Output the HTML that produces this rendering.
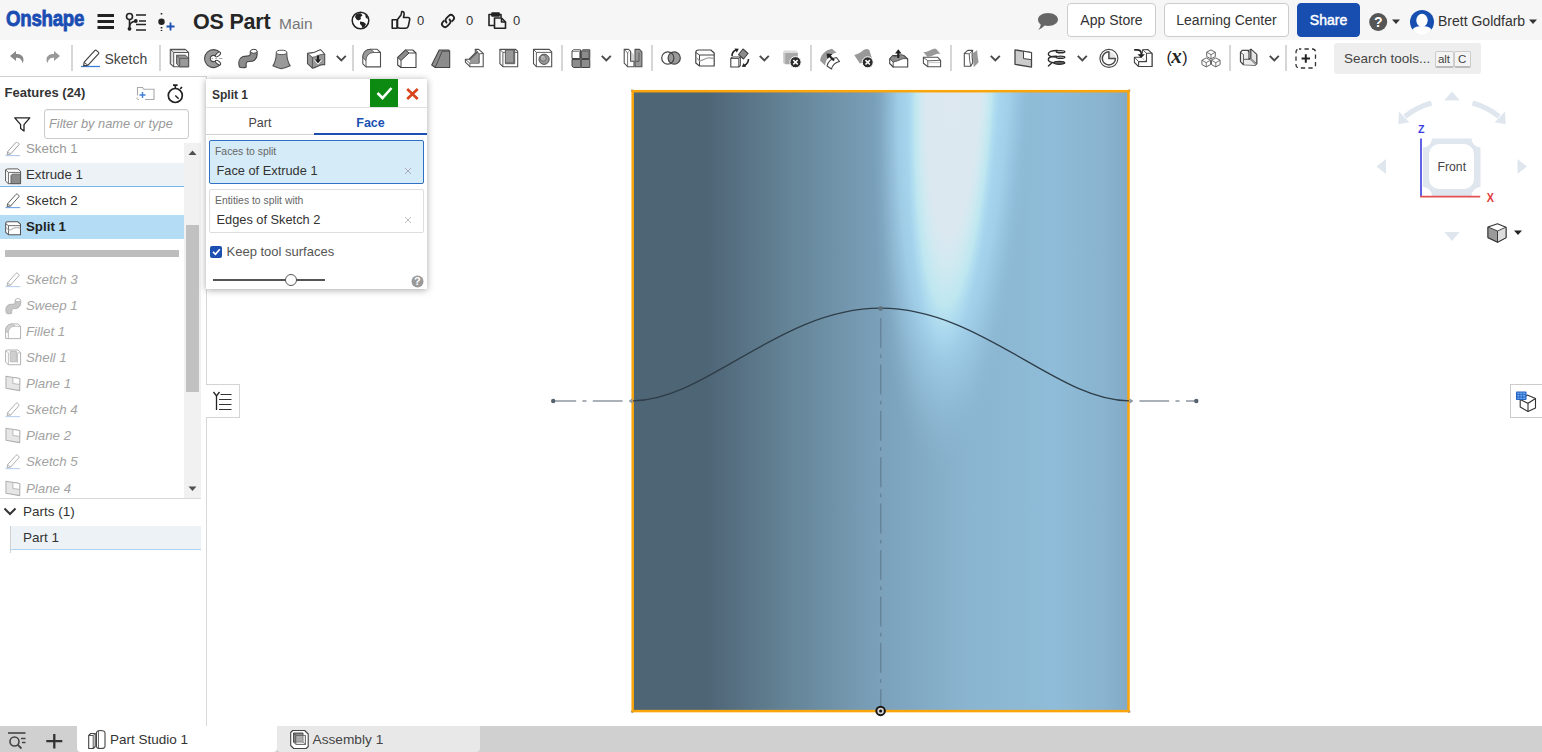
<!DOCTYPE html>
<html lang="en">
<head>
<meta charset="utf-8">
<title>OS Part - Onshape</title>
<style>
*{box-sizing:border-box;margin:0;padding:0}
html,body{width:1542px;height:752px;overflow:hidden;background:#fff;font-family:"Liberation Sans",sans-serif;color:#333}
.abs{position:absolute}
#topbar{position:absolute;left:0;top:0;width:1542px;height:40px;background:#f6f6f6}
#toolbar{position:absolute;left:0;top:0;width:1542px;height:76px}
#toolbg{position:absolute;left:0;top:40px;width:1542px;height:36px;background:#fff}
.sep{position:absolute;top:45px;width:1.500px;height:26px;background:#d6d6d6}
.btn{position:absolute;top:3px;height:34px;border:1px solid #ccc;border-radius:4px;background:#fff;font-size:14px;line-height:33.500px;text-align:center;color:#333}
svg{position:absolute;overflow:visible}
.t{position:absolute;white-space:nowrap;line-height:1}
.kbd{height:17px;border:1px solid #ccc;border-bottom:2px solid #bbb;border-radius:2px;background:#f4f4f4;font-size:11.500px;line-height:14px;text-align:center;color:#444}
/* feature list */
#features{position:absolute;left:0;top:76px;width:207px;height:650px;background:#fff;border-top:1px solid #d0d0d0;border-right:1px solid #d8d8d8}
#flist{position:absolute;left:0;top:65px;width:184px;height:356px;overflow:hidden}
.row{position:absolute;left:0;width:184px;height:26px;font-size:13.300px;line-height:26px;padding-left:26px;color:#333;white-space:nowrap}
.row.dim{color:#a3a3a3;font-style:italic}
.row svg{left:5px;top:4.500px;transform:scale(0.95);transform-origin:0 50%}
/* dialog */
#dialog{position:absolute;left:206px;top:79px;width:221px;height:210px;background:#fff;box-shadow:0 1px 7px rgba(0,0,0,.35)}
/* bottom */
#bottombar{position:absolute;left:0;top:726px;width:1542px;height:26px;background:#d0d0d0}
</style>
</head>
<body>
<!-- VIEWPORT -->
<svg id="viewport" class="abs" style="left:0;top:0" width="1542" height="752" viewBox="0 0 1542 752">
<defs>
<linearGradient id="gbody" x1="633" x2="1129" y1="0" y2="0" gradientUnits="userSpaceOnUse">
<stop offset="0" stop-color="#4e6576"/>
<stop offset="0.15" stop-color="#4e6576"/>
<stop offset="0.32" stop-color="#658598"/>
<stop offset="0.5" stop-color="#7ba1bb"/>
<stop offset="0.68" stop-color="#8ab5d0"/>
<stop offset="0.85" stop-color="#8fbcd8"/>
<stop offset="0.95" stop-color="#89b3cf"/>
<stop offset="1" stop-color="#82aac7"/>
</linearGradient>
<radialGradient id="ghalo" cx="0.5" cy="0.5" r="0.5">
<stop offset="0" stop-color="#aad8f1" stop-opacity="0.97"/>
<stop offset="0.55" stop-color="#aad8f1" stop-opacity="0.96"/>
<stop offset="0.7" stop-color="#a7d5ef" stop-opacity="0.8"/>
<stop offset="0.82" stop-color="#a1cfeb" stop-opacity="0.45"/>
<stop offset="0.92" stop-color="#99c7e3" stop-opacity="0.15"/>
<stop offset="1" stop-color="#94c4e2" stop-opacity="0"/>
</radialGradient>
<radialGradient id="ghi" cx="0.5" cy="0.5" r="0.5">
<stop offset="0" stop-color="#dde8f0" stop-opacity="1"/>
<stop offset="0.58" stop-color="#dce8f0" stop-opacity="1"/>
<stop offset="0.7" stop-color="#d0e9f1" stop-opacity="1"/>
<stop offset="0.82" stop-color="#c0e8f0" stop-opacity="0.95"/>
<stop offset="0.92" stop-color="#b0ddf0" stop-opacity="0.6"/>
<stop offset="1" stop-color="#a8d6f0" stop-opacity="0"/>
</radialGradient>
<clipPath id="cbody"><rect x="632.700" y="91.200" width="495.800" height="619.900"/></clipPath>
</defs>
<rect x="632.700" y="91.200" width="495.800" height="619.900" fill="url(#gbody)"/>
<g clip-path="url(#cbody)">
<ellipse cx="955" cy="60" rx="80" ry="410" fill="url(#ghalo)" transform="rotate(2.4 955 60)"/>
<ellipse cx="955" cy="60" rx="47" ry="298" fill="url(#ghi)" transform="rotate(2.4 955 60)"/>
</g>
<g fill="#8a8f96"><circle cx="632.300" cy="90.800" r="1.400"/><circle cx="1129" cy="90.800" r="1.400"/><circle cx="632.300" cy="711.500" r="1.400"/><circle cx="1129" cy="711.500" r="1.400"/></g><rect x="632.700" y="91.200" width="495.800" height="619.900" fill="none" stroke="#fba50c" stroke-width="2.500"/>
<!-- construction lines -->
<g fill="none" stroke="#8e98a1" stroke-width="1.400">
<path d="M553 401h23.200M582.400 401h4.100M592.800 401h29.800"/>
<path d="M1139.400 401h29.800M1175.500 401h4.100M1186 401h10"/>
</g>
<circle cx="553.200" cy="401" r="2.200" fill="#56626d"/>
<circle cx="1196.300" cy="401" r="2.200" fill="#56626d"/>
<path d="M628.500 401l4-2.800v5.600z" fill="#8e98a1"/>
<path d="M1133.500 401l-4-2.800v5.600z" fill="#8e98a1"/>
<path d="M880.700 318V710" fill="none" stroke="#66849a" stroke-width="1.500" stroke-dasharray="30 6.400 3.600 6.400"/>
<!-- spline -->
<path d="M633 400.800C705.500 400.800 780 308.200 880.600 308.200C981 308.200 1056.500 400.800 1129 400.800" fill="none" stroke="#2e3d48" stroke-width="1.250"/>
<circle cx="880.600" cy="308.500" r="2.300" fill="#5e6f7c"/>
<!-- origin -->
<circle cx="880.600" cy="710.900" r="4.250" fill="#d4d4d4" stroke="#161616" stroke-width="2"/>
<circle cx="880.600" cy="710.900" r="1.500" fill="#111"/>
</svg>
<div id="topbar">
<div class="t" id="logo" style="left:5.800px;top:8px;font-size:22.500px;font-weight:bold;color:#1a4db3;letter-spacing:-0.3px;-webkit-text-stroke:0.85px #1a4db3;transform-origin:0 0;transform:scaleX(0.83)">Onshape</div>
<svg style="left:97px;top:13px" width="18" height="17" viewBox="0 0 18 17"><path d="M0.5 2.5h16.5M0.5 8.5h16.5M0.5 14.5h16.5" stroke="#222" stroke-width="2.8" fill="none"/></svg>
<svg style="left:125px;top:12px" width="22" height="20" viewBox="0 0 22 20"><circle cx="4.5" cy="4.5" r="3" fill="#f6f6f6" stroke="#222" stroke-width="1.6"/><path d="M4.5 7.5v8.5" stroke="#222" stroke-width="1.6" fill="none"/><path d="M4.5 15c0-4 2-5.500 6-5.800" stroke="#222" stroke-width="1.6" fill="none"/><circle cx="4.500" cy="16.8" r="1.900" fill="#222"/><circle cx="10.800" cy="9" r="1.900" fill="#222"/><path d="M11 3h10M14 9h7M11 12.500h10M11 18h10" stroke="#222" stroke-width="1.500" fill="none"/></svg>
<svg style="left:157px;top:12px" width="20" height="20" viewBox="0 0 20 20"><path d="M4.500 1v3M4.500 15v4" stroke="#222" stroke-width="1.600" stroke-dasharray="1.500 1.500" fill="none"/><circle cx="4.500" cy="9.800" r="3.200" fill="#222"/><path d="M13.500 10.500v8M9.500 14.500h8" stroke="#1b4fb2" stroke-width="1.800" fill="none"/></svg>
<div class="t" style="left:193px;top:11.500px;font-size:21.5px;font-weight:bold;color:#262626;letter-spacing:-0.2px">OS Part</div>
<div class="t" style="left:279px;top:16px;font-size:15.500px;color:#777">Main</div>
<svg style="left:351px;top:11px" width="19" height="19" viewBox="0 0 19 19"><circle cx="9.500" cy="9.500" r="8.300" fill="#fff" stroke="#222" stroke-width="1.500"/><path d="M5 3.500c2-1.500 4-1.500 5-1l1.500 2-2 1.500 0.500 2-2.500 1.500-2-1-1.500-2.500zM9 10.500l3.500 0.500 2.500 2-1.500 3-2 1-1-2.500-1.500-1.500zM14 4l2 1 1 3-2-1z" fill="#222"/></svg>
<svg style="left:391px;top:10px" width="20" height="20" viewBox="0 0 20 20"><path d="M6.500 9.500l3.500-4.500c0.500-1 0.300-2.500 0.800-3.500 1.500-0.300 2.500 1 2.300 2.800l-0.600 3.200h4.500c1.300 0 2 1 1.700 2.200l-1.400 6.500c-0.300 1.300-1.200 2-2.500 2h-5.800c-1 0-1.800-0.400-2.500-0.900zM1.200 9.800h4.800v8.500h-4.800z" fill="none" stroke="#222" stroke-width="1.600" stroke-linejoin="round"/></svg>
<div class="t" style="left:417px;top:14px;font-size:13px;color:#333">0</div>
<svg style="left:440px;top:13px" width="16" height="16" viewBox="0 0 16 16"><g fill="none" stroke="#222" stroke-width="1.800" stroke-linecap="round"><path d="M6.500 9.500c-1.300-1.300-1.300-3 0-4.300l2.300-2.300c1.300-1.300 3-1.300 4.300 0s1.300 3 0 4.300l-1 1"/><path d="M9.500 6.500c1.300 1.300 1.300 3 0 4.300l-2.300 2.300c-1.300 1.300-3 1.300-4.300 0s-1.300-3 0-4.300l1-1"/></g></svg>
<div class="t" style="left:466px;top:14px;font-size:13px;color:#333">0</div>
<svg style="left:488px;top:12px" width="19" height="17" viewBox="0 0 19 17"><g fill="none" stroke="#222" stroke-width="1.600" stroke-linejoin="round"><path d="M6.500 13.500h-5.500v-11h3M11 2.500h2v3"/><path d="M4 1h7v3h-7z" fill="#222"/><path d="M6.500 6h7l4 4v6.200h-11z"/><path d="M13.500 6v4h4"/></g></svg>
<div class="t" style="left:513px;top:14px;font-size:13px;color:#333">0</div>
<svg style="left:1037px;top:13px" width="22" height="18" viewBox="0 0 22 18"><path d="M11 0c5.500 0 10 2.900 10 6.500s-4.500 6.500-10 6.500c-1.200 0-2.300-0.100-3.400-0.400-1.600 1.900-3.800 3.400-6.400 4.400 1.400-1.600 2.300-3.500 2.500-5.500-1.700-1.200-2.700-3-2.700-5 0-3.600 4.500-6.500 10-6.500z" fill="#666"/></svg>
<div class="btn" style="left:1067px;width:89px">App Store</div>
<div class="btn" style="left:1164px;width:125px">Learning Center</div>
<div class="btn" style="left:1297px;width:63px;background:#174eb0;border-color:#174eb0;color:#fff;-webkit-text-stroke:0.450px #fff;font-size:14px">Share</div>
<svg style="left:1369px;top:13px" width="32" height="18" viewBox="0 0 32 18"><circle cx="9.200" cy="9" r="9" fill="#555"/><path d="M23 6.500h8l-4 4.500z" fill="#333"/></svg>
<div class="t" style="left:1374px;top:14.500px;font-size:14px;font-weight:bold;color:#fff">?</div>
<svg style="left:1410px;top:10px" width="24" height="25" viewBox="0 0 24 25"><defs><clipPath id="cav"><circle cx="12" cy="12" r="12"/></clipPath></defs><circle cx="12" cy="12" r="12" fill="#174eb0"/><g clip-path="url(#cav)"><ellipse cx="12" cy="10.300" rx="5.700" ry="6.500" fill="#fff"/></g><path d="M2.500 19.500c2-2.800 5.500-3.500 9.500-3.500s7.500 0.700 9.500 3.500c-2 3.500-5.500 5-9.500 5s-7.500-1.500-9.500-5z" fill="#fff"/></svg>
<div class="t" style="left:1438px;top:14px;font-size:14px;color:#333">Brett Goldfarb</div>
<svg style="left:1529px;top:19px" width="9" height="6" viewBox="0 0 9 6"><path d="M0 0.500h8l-4 4.500z" fill="#333"/></svg>
</div>
<div id="toolbg"></div>
<div id="toolbar">
<svg style="left:10px;top:51px" width="15" height="14" viewBox="0 0 15 14" ><path d="M6 0l-6 5 6 5v-3.200c3.500 0 5.500 1.200 6.500 5.200 0.800-1 1-2.200 1-3.200 0-3.800-3-5.800-7.500-5.800z" fill="#888"/></svg>
<svg style="left:45px;top:51px" width="15" height="14" viewBox="0 0 15 14" ><path d="M9 0l6 5-6 5v-3.200c-3.500 0-5.500 1.200-6.500 5.200-0.800-1-1-2.200-1-3.200 0-3.800 3-5.800 7.500-5.800z" fill="#999"/></svg>
<div class="sep" style="left:71px"></div>
<svg style="left:81px;top:49px" width="20" height="19" viewBox="0 0 20 19" ><path d="M0 17.500h19" stroke="#3d7fd6" stroke-width="1.300"/><path d="M3.200 13.200l10.500-11.500c0.600-0.600 1.300-0.600 1.900-0.100l1.700 1.500c0.600 0.500 0.600 1.200 0.100 1.800l-10.300 11.300-4.500 0.700z" fill="#fff" stroke="#444" stroke-width="1.200" stroke-linejoin="round"/><path d="M3.300 13.400l3.600 2.900" stroke="#444" stroke-width="1" fill="none"/></svg>
<div class="t" style="left:104.500px;top:51.500px;font-size:14px;color:#444">Sketch</div>
<div class="sep" style="left:159px"></div>
<svg style="left:170px;top:49px" width="19" height="19" viewBox="0 0 19 19" ><path d="M0.300 0.400h15l3.300 3v14.400h-14.900l-3.400-3.300z" fill="#fff" stroke="#555" stroke-width="1.100" stroke-linejoin="round"/><path d="M0.300 0.400l3.400 3.100v14.300M3.700 3.500h14.900" fill="none" stroke="#555" stroke-width="1"/><path d="M1.900 2v11.800M2.200 1.800h13" fill="none" stroke="#999" stroke-width="0.700"/><path d="M6.600 6.200h8.900l3.100 3.100v8.500h-8.900l-3.100-2.900z" fill="#999" stroke="#555" stroke-width="1" stroke-linejoin="round"/><path d="M6.600 6.200l3.100 3.100v8.500M9.700 9.300h8.900" fill="none" stroke="#555" stroke-width="0.900"/></svg>
<svg style="left:204px;top:49px" width="19" height="19" viewBox="0 0 19 19" ><path d="M16.400 3.800A9 9 0 1 0 16.400 15.400L11.700 11.500A3.100 3.100 0 1 1 11.700 7.500Z" fill="#999" stroke="#484848" stroke-width="1.100" stroke-linejoin="round"/><ellipse cx="14" cy="5.500" rx="3.100" ry="1.500" transform="rotate(-40 14 5.500)" fill="#fff" stroke="#484848" stroke-width="1"/><ellipse cx="14" cy="13.600" rx="3.100" ry="1.500" transform="rotate(40 14 13.600)" fill="#fff" stroke="#484848" stroke-width="1"/><path d="M7.600 9.500h1.500M11.200 9.500h1.600M15.100 9.500h3.300" stroke="#999" stroke-width="0.900"/></svg>
<svg style="left:238px;top:48px" width="21" height="21" viewBox="0 0 21 21" ><path d="M1.500 19c-1.500-4.500-0.500-9 3.500-10.500 3-1 6 0.500 7-1.500 0.500-1 0-2.500 0.500-4l6.500 0.500c0.500 3.500 0 7-3 9-3 2-6.500 0-7.500 2-0.700 1.300-0.300 2.800-0.300 4.500-1.500 1-5 1-6.700 0z" fill="#8c8c8c" stroke="#444" stroke-width="1.100" stroke-linejoin="round"/><ellipse cx="15.800" cy="3.300" rx="3.300" ry="2" fill="#fff" stroke="#444" stroke-width="1"/></svg>
<svg style="left:272px;top:48.5px" width="20" height="21" viewBox="0 0 20 21" ><path d="M4.400 3.400c-0.200 5.500-1 9.800-3.500 13.300 2.800 1.300 5.600 2.300 8.400 3 3-0.700 6-1.700 8.900-3-2.500-3.500-3.300-7.800-3.500-13.300z" fill="#999" stroke="#505050" stroke-width="1.100" stroke-linejoin="round"/><ellipse cx="9.500" cy="3.400" rx="5.200" ry="2.200" fill="#fff" stroke="#505050" stroke-width="1"/></svg>
<svg style="left:306px;top:49px" width="20" height="20" viewBox="0 0 20 20" ><path d="M1.500 4.400c2.500-0.200 4.500-0.300 6.900-1 2.400-0.800 4-2.300 6.400-2.500l3.900 4.500v10.300c-2.500-0.200-4.300 0.200-6.400 1.200-2 1-3.400 2-5.900 2.300l-4.900-4.500z" fill="#999" stroke="#505050" stroke-width="1.100" stroke-linejoin="round"/><path d="M1.500 4.400c2.500-0.200 4.500-0.300 6.900-1 2.400-0.800 4-2.300 6.400-2.500l3.900 4.500c-2.500-0.200-4.300 0.200-6.400 1-2 0.900-3.400 1.700-5.900 1.900z" fill="#fff" stroke="#505050" stroke-width="0.900" stroke-linejoin="round"/><path d="M6.400 8.300v10.900" stroke="#505050" stroke-width="0.900"/><path d="M8.400 10.800l3.600 4.400 3.700-4.400" fill="none" stroke="#fff" stroke-width="1"/><path d="M10.900 6.400h2.200v4h1.900l-3 3.900-3-3.900h1.900z" fill="#222"/></svg>
<svg style="left:336px;top:55px" width="11" height="7" viewBox="0 0 11 7" ><path d="M0.8 0.8l4.500 4.700 4.500-4.700" fill="none" stroke="#4a4a4a" stroke-width="1.900"/></svg>
<div class="sep" style="left:352px"></div>
<svg style="left:362px;top:49px" width="20" height="19" viewBox="0 0 20 19" ><path d="M0.800 14.800v-6.300c0-5 3-8.200 8.200-8.200h6.200l3.300 3.200v14.400h-14.500z" fill="#fff" stroke="#505050" stroke-width="1.100" stroke-linejoin="round"/><path d="M0.800 8.500c0-5 3-8.200 8.200-8.200l3.200 3.200c-5.200 0-8.200 3.200-8.200 8.200z" fill="#999" stroke="#505050" stroke-width="0.900" stroke-linejoin="round"/><path d="M4 11.700v6.200M12.200 3.500h6.300" fill="none" stroke="#505050" stroke-width="0.900"/></svg>
<svg style="left:396.7px;top:49px" width="20" height="20" viewBox="0 0 20 20" ><path d="M0.700 16v-7.500l8-7.500h7l3.300 3v14.500h-15z" fill="#fff" stroke="#444" stroke-width="1.100" stroke-linejoin="round"/><path d="M0.700 8.500l8-7.500 3.300 3-8 7.500z" fill="#8c8c8c" stroke="#444" stroke-width="1"/><path d="M12 4h7M4 11.500v7M4 18.500l-3.300-2.500" fill="none" stroke="#444" stroke-width="1"/></svg>
<svg style="left:431px;top:49px" width="20" height="20" viewBox="0 0 20 20" ><path d="M0.700 16l7.500-15h9.500l1 1.200v16.300h-14.500z" fill="#8c8c8c" stroke="#444" stroke-width="1.100" stroke-linejoin="round"/><path d="M4.200 18.500l7-16.300h7.500" fill="none" stroke="#444" stroke-width="0.900"/></svg>
<svg style="left:465px;top:49px" width="20" height="19" viewBox="0 0 20 19" ><path d="M10.300 0.400H13.700L18.200 4.400V17.700H4.900L0.400 13.200V10.300H3.900L10.300 3.900Z" fill="#fff" stroke="#505050" stroke-width="1.100" stroke-linejoin="round"/><path d="M4.400 10.800L12.700 2.900L14.200 4.900V13.700H5.400Z" fill="#999"/><path d="M4.200 10.600L12.600 2.600" stroke="#5a5a5a" stroke-width="1.600"/><path d="M0.400 10.300L4.900 14.200V17.700M4.900 14.200H14.200V4.900M10.300 0.500L14.200 4.900L18.200 4.400" fill="none" stroke="#505050" stroke-width="0.900"/></svg>
<svg style="left:499px;top:49px" width="20" height="19" viewBox="0 0 20 19" ><path d="M0.900 0.400H16.700L18.700 2.400V17.700H3.900L0.900 14.700Z" fill="#fff" stroke="#505050" stroke-width="1.100" stroke-linejoin="round"/><path d="M6.400 0.900H15.700V14.700H6.400Z" fill="#999" stroke="#505050" stroke-width="0.900"/><path d="M14.800 1V13.800H6.600" fill="none" stroke="#6a6a6a" stroke-width="1.300"/><path d="M0.900 0.400L3.900 3.400V17.700M3.900 3.400H6.400M15.700 3.400H18.700M16.700 0.400L15.700 1.500" fill="none" stroke="#505050" stroke-width="0.900"/></svg>
<svg style="left:533px;top:49px" width="20" height="19" viewBox="0 0 20 19" ><path d="M0.500 0.400H16.200L18.700 2.900V17.700H3.400L0.500 14.700Z" fill="#fff" stroke="#505050" stroke-width="1.100" stroke-linejoin="round"/><path d="M0.500 0.400L3.400 3.400V17.700M3.400 3.400H18.700" fill="none" stroke="#505050" stroke-width="0.900"/><circle cx="11.100" cy="10.300" r="5.100" fill="#999" stroke="#505050" stroke-width="1"/><circle cx="10.200" cy="9.300" r="3.100" fill="#aaa" stroke="#666" stroke-width="0.900"/><path d="M8.500 8.600a2 2 0 0 1 2-1.500" fill="none" stroke="#ddd" stroke-width="0.800"/></svg>
<div class="sep" style="left:561px"></div>
<svg style="left:571px;top:49px" width="20" height="20" viewBox="0 0 20 20" ><path d="M1 2l1.500-1.200h7v8.700h-8.500z" fill="#fff" stroke="#444" stroke-width="1"/><path d="M10.300 2l1.500-1.200h7v8.700h-8.500z" fill="#8c8c8c" stroke="#444" stroke-width="1"/><path d="M1 10.500h8.500v8h-7l-1.500-1.300z" fill="#8c8c8c" stroke="#444" stroke-width="1"/><path d="M10.300 10.500h8.500v8h-8.500z" fill="#8c8c8c" stroke="#444" stroke-width="1"/><path d="M1 2.500h7.500v7M10.300 2.500h7.300v7M9.500 10.500v8" fill="none" stroke="#666" stroke-width="0.700"/></svg>
<svg style="left:601px;top:55px" width="11" height="7" viewBox="0 0 11 7" ><path d="M0.8 0.8l4.500 4.700 4.500-4.700" fill="none" stroke="#4a4a4a" stroke-width="1.900"/></svg>
<svg style="left:623px;top:49px" width="20" height="19" viewBox="0 0 20 19" ><path d="M6.100 0.900L11 5.400V12.300H7.600V2.400Z" fill="#d4d4d4"/><path d="M1.200 0.400H5.600L7.600 2.400V12.300H11V17.700H4.600L1.200 14.200Z" fill="#fff" stroke="#505050" stroke-width="1.100" stroke-linejoin="round"/><path d="M1.200 0.400L4.600 3.900V17.700M4.600 3.900L5.800 2.800" fill="none" stroke="#505050" stroke-width="0.800"/><path d="M12 0.400H16.500L18.900 2.900V17.700H12Z" fill="#999" stroke="#505050" stroke-width="1.100" stroke-linejoin="round"/><path d="M16 3.400V12.300H13" fill="none" stroke="#505050" stroke-width="0.900"/></svg>
<div class="sep" style="left:651px"></div>
<svg style="left:661px;top:50px" width="20" height="16" viewBox="0 0 20 16" ><circle cx="6.800" cy="8" r="6.100" fill="#fff"/><circle cx="13.200" cy="8" r="6.100" fill="#999" stroke="#444" stroke-width="1.200"/><circle cx="6.800" cy="8" r="6.100" fill="none" stroke="#444" stroke-width="1.200"/></svg>
<svg style="left:695px;top:49px" width="20" height="19" viewBox="0 0 20 19" ><path d="M0.800 3.500c0-1.500 1-2.500 2.500-2.500h12.500l3.400 3v13h-14.700l-3.700-3z" fill="#fff" stroke="#444" stroke-width="1.200" stroke-linejoin="round"/><path d="M0.800 3.500l3.700 2.500v11M4.500 6h14.700" fill="none" stroke="#444" stroke-width="1"/><path d="M0.800 8.500c1.500 0.500 2.500 2 3.700 3.500 3.500-0.500 5.500-2.500 8-3 2.500-0.500 4.500 0 6.700 0.500" fill="none" stroke="#999" stroke-width="1.200"/></svg>
<svg style="left:730px;top:48px" width="20" height="20" viewBox="0 0 20 20" ><path d="M0.800 10.500l1.500-1.500h8l0 8.500-1.500 1.500h-8z" fill="#fff" stroke="#444" stroke-width="1.100" stroke-linejoin="round"/><path d="M0.800 10.500h8v8.500M8.800 10.500l1.500-1.500" fill="none" stroke="#444" stroke-width="0.900"/><path d="M13 1l5 4.500-4.500 5.500-5-4.500z" fill="#8c8c8c" stroke="#444" stroke-width="1.100" stroke-linejoin="round"/><path d="M2 8c0-3 1.500-5 4-6" fill="none" stroke="#222" stroke-width="1.600"/><path d="M4.500 0.500l4.300 0.300-2 3.700z" fill="#222"/><path d="M18.500 11c0 3-1.500 5-4 6.500" fill="none" stroke="#222" stroke-width="1.600"/><path d="M16 19l-4.300-0.300 2-3.700z" fill="#222"/></svg>
<svg style="left:759px;top:55px" width="11" height="7" viewBox="0 0 11 7" ><path d="M0.8 0.8l4.500 4.700 4.500-4.700" fill="none" stroke="#4a4a4a" stroke-width="1.900"/></svg>
<svg style="left:783px;top:49px" width="19" height="19" viewBox="0 0 19 19" ><path d="M0.200 3l1.900 0.900v11.300l-1.900-1.200z" fill="#c8c8c8"/><path d="M0.200 3l0.800-1.600h12.500l1.400 2.500h-12.800z" fill="#dcdcdc"/><path d="M2.100 3.900h12.800v11.300h-12.800z" fill="#a8a8a8"/><circle cx="12.500" cy="13.200" r="5.600" fill="#2b2b2b" stroke="#fff" stroke-width="1"/><path d="M10.300 11l4.400 4.400M14.700 11l-4.400 4.400" stroke="#fff" stroke-width="1.500"/></svg>
<div class="sep" style="left:810px"></div>
<svg style="left:819px;top:48px" width="22" height="21" viewBox="0 0 22 21" ><path d="M1 12.500c1-6 5-10.500 12-11.800l4.500 4c-6 1-10 4.500-11.500 12.800z" fill="#999"/><path d="M8 18c1-4 4-7.500 9.500-8.500l3 4c-4.500 1-7 3.500-8 7.500z" fill="#fff" stroke="#444" stroke-width="1.100" stroke-linejoin="round"/><path d="M7.500 5.500l1 5.500 1.800-1.800 4 4 1.500-1.500-4-4 1.800-1.800z" fill="#222"/></svg>
<svg style="left:854px;top:48px" width="20" height="21" viewBox="0 0 20 21" ><path d="M0.300 7c3-1 5.500-1.800 7.500-3.500 2-1.800 5-3.500 7.500-1.500l2.500 8-3 5c-3-1-6 0-9 0.500z" fill="#999"/><circle cx="13.700" cy="14.300" r="5.500" fill="#2b2b2b" stroke="#fff" stroke-width="1"/><path d="M11.500 12.100l4.400 4.400M15.900 12.100l-4.400 4.400" stroke="#fff" stroke-width="1.500"/></svg>
<svg style="left:889px;top:49px" width="20" height="19" viewBox="0 0 20 19" ><path d="M0.700 10l3-3.500h11l4 3.500v8h-14.500l-3.500-3.500z" fill="#fff" stroke="#444" stroke-width="1.100" stroke-linejoin="round"/><path d="M0.700 10l3-3.500c1.500 1 3 1.200 5 0.200s4-1.500 6-0.200l4 3.500c-3-0.800-5-0.500-7 0.500s-4.500 1.800-7.500 2.500z" fill="#8c8c8c" stroke="#444" stroke-width="0.900"/><path d="M4.200 13v5.500" stroke="#444" stroke-width="0.900"/><path d="M8.200 9v-4.500h-2.200l3.300-4.200 3.300 4.200h-2.200v4.500z" fill="#222"/></svg>
<svg style="left:923px;top:48px" width="20" height="20" viewBox="0 0 20 20" ><path d="M0.400 3.900c2.500 0.200 4.500-0.500 6.500-1.500s4-1.700 6.300-1.500l4.400 5c-2.500-0.300-4.500 0.200-6.600 1.200s-4 1.700-6.700 1.700z" fill="#999"/><path d="M0.400 9.300H14.700L17.600 12.300V18.700H4.800L0.400 15.200Z" fill="#fff" stroke="#505050" stroke-width="1.100" stroke-linejoin="round"/><path d="M0.400 9.300L4.800 12.800V18.700M4.800 12.800L17.600 12.300" fill="none" stroke="#505050" stroke-width="0.900"/><path d="M5.500 14.500H17" stroke="#ccc" stroke-width="1.200"/></svg>
<div class="sep" style="left:950px"></div>
<svg style="left:963px;top:49px" width="17" height="19" viewBox="0 0 17 19" ><path d="M9.700 3.900c1.700-0.700 3.200-1.700 4.400-3 0.200 4 0.700 8.200 1.500 12.300-1.500 1.600-3.100 3.300-4.900 5-0.300-5-0.600-9.700-1-14.300z" fill="#999"/><path d="M1.300 4.400L4.800 1.400H9.700C9 3 8.800 5 9.200 8.500C9.500 11 9.700 12.500 9.700 13.700L7.700 17.200H1.300Z" fill="#fff" stroke="#505050" stroke-width="1.100" stroke-linejoin="round"/><path d="M1.300 4.400L6.200 4.900L9.700 1.400M6.200 4.900C6.300 9 6.800 13.500 7.700 17.200" fill="none" stroke="#505050" stroke-width="0.900"/></svg>
<svg style="left:990px;top:55px" width="11" height="7" viewBox="0 0 11 7" ><path d="M0.8 0.8l4.500 4.700 4.500-4.700" fill="none" stroke="#4a4a4a" stroke-width="1.900"/></svg>
<svg style="left:1014px;top:49px" width="19" height="19" viewBox="0 0 19 19" ><path d="M1 0.800l16.500 2.800v14.500l-16.500-2.800z" fill="#ccc" stroke="#444" stroke-width="1.300" stroke-linejoin="round"/><path d="M9.500 2.300l8 1.300v7l-8-1z" fill="#fff" stroke="#444" stroke-width="1"/></svg>
<svg style="left:1047px;top:49px" width="19" height="19" viewBox="0 0 19 19" ><g fill="none" stroke="#2a2a2a" stroke-width="1.400" stroke-linecap="round"><ellipse cx="13.500" cy="2.700" rx="4.300" ry="1.100"/><ellipse cx="13.500" cy="8.200" rx="4.300" ry="1.100"/><ellipse cx="12.300" cy="13.800" rx="5.400" ry="1.400" fill="#666"/><path d="M10.500 1.500C5 1.300 1.300 2.900 1.300 4.900S4.500 7.800 9.500 8"/><path d="M9.500 7.100C4.500 7 1.300 8.500 1.300 10.400S4 13.400 7.500 13.700"/><path d="M4.700 13.900L1.400 16.900"/></g></svg>
<svg style="left:1077px;top:55px" width="11" height="7" viewBox="0 0 11 7" ><path d="M0.8 0.8l4.500 4.700 4.500-4.700" fill="none" stroke="#4a4a4a" stroke-width="1.900"/></svg>
<svg style="left:1099px;top:49px" width="20" height="20" viewBox="0 0 20 20" ><circle cx="9.900" cy="9.400" r="9" fill="#fff" stroke="#4a4a4a" stroke-width="1.100"/><path d="M9.900 2.800A6.600 6.600 0 0 1 16.500 9.400H9.900Z" fill="#e6e6e6"/><path d="M9.900 2.800A6.600 6.600 0 1 0 16.500 9.400" fill="none" stroke="#4a4a4a" stroke-width="1.500"/><path d="M9.900 2.300V9.400H16.900" fill="none" stroke="#4a4a4a" stroke-width="1.500"/></svg>
<svg style="left:1134px;top:48px" width="19" height="20" viewBox="0 0 19 20" ><path d="M8.500 1.700l5.300-0.200 4.200 3.800v13.200h-13.400l-4.200-4v-5.300h6.800" fill="#fff" stroke="#444" stroke-width="1.100" stroke-linejoin="round"/><path d="M4.600 13.600h7.900v-8.300h5.500v13.200h-13.400z" fill="#fff" stroke="#444" stroke-width="1.100" stroke-linejoin="round"/><path d="M0.400 9.200l4.200 4.400M8.500 1.700l4 3.600M8.500 1.700v4" fill="none" stroke="#444" stroke-width="0.900"/><path d="M7.200 9.200l5.300 4.400" fill="none" stroke="#666" stroke-width="0.700" stroke-dasharray="1.500 1"/><path d="M0.200 1.900h2.800c2.700 0 4.200 1.200 4.200 3.500v1.500" fill="none" stroke="#222" stroke-width="1.600"/><path d="M3.500 6.300l3.700 3.700 3.700-3.700z" fill="#222"/></svg>
<div class="t" style="left:1166.500px;top:48px;font-size:16px;color:#222"><span>(</span><b style="font-family:'Liberation Serif',serif;font-style:italic;font-size:21px;line-height:16px;margin:0 0.500px 0 -0.700px">x</b><span>)</span></div>
<svg style="left:1201px;top:49px" width="20" height="21" viewBox="0 0 20 21" ><path d="M10 0.9000000000000004l4.3 2.365v4.3l-4.3 2.365l-4.3-2.365v-4.3z" fill="#fff" stroke="#555" stroke-width="0.900" stroke-linejoin="round"/><path d="M5.7 3.2650000000000006l4.3 2.365l4.3-2.365M10 5.630000000000001v4.3" fill="none" stroke="#555" stroke-width="0.800"/><path d="M5.2 8.899999999999999l4.3 2.365v4.3l-4.3 2.365l-4.3-2.365v-4.3z" fill="#fff" stroke="#555" stroke-width="0.900" stroke-linejoin="round"/><path d="M0.9000000000000004 11.264999999999999l4.3 2.365l4.3-2.365M5.2 13.629999999999999v4.3" fill="none" stroke="#555" stroke-width="0.800"/><path d="M14.8 8.899999999999999l4.3 2.365v4.3l-4.3 2.365l-4.3-2.365v-4.3z" fill="#fff" stroke="#555" stroke-width="0.900" stroke-linejoin="round"/><path d="M10.5 11.264999999999999l4.3 2.365l4.3-2.365M14.8 13.629999999999999v4.3" fill="none" stroke="#555" stroke-width="0.800"/></svg>
<div class="sep" style="left:1229px"></div>
<svg style="left:1240px;top:48px" width="19" height="20" viewBox="0 0 19 20" ><path d="M0.500 4.400l1.700-2.100h6.200v8.300h1.700v-8.900l0.900-0.400 5.700 5.300v9.200l-1.700 1.400-11.500-0.500-3-3.100z" fill="#fff" stroke="#444" stroke-width="1.300" stroke-linejoin="round"/><path d="M3.600 4.200h4.800v6.600h-4.800z" fill="#ececec"/><path d="M3.600 12h6.700l5.200 4.900-11.900-0.400z" fill="#ececec"/><path d="M11 1.300l5.700 5.300v9.200l-5.700-5.200z" fill="#e4e4e4" stroke="#444" stroke-width="0.900" stroke-linejoin="round"/><path d="M10.300 11.200l5.700 5.200" stroke="#999" stroke-width="1.600"/><path d="M0.500 4.400l2.900 2v10.200M3.600 11.300h6.500" fill="none" stroke="#444" stroke-width="0.900"/></svg>
<svg style="left:1269px;top:55px" width="11" height="7" viewBox="0 0 11 7" ><path d="M0.8 0.8l4.500 4.700 4.500-4.700" fill="none" stroke="#4a4a4a" stroke-width="1.900"/></svg>
<div class="sep" style="left:1285px"></div>
<svg style="left:1295px;top:47.5px" width="22" height="21" viewBox="0 0 22 21" ><rect x="1" y="1" width="19.500" height="19" rx="3" fill="none" stroke="#333" stroke-width="1.300" stroke-dasharray="4.300 3.200" stroke-dashoffset="2"/><path d="M10.800 6.300v8.400M6.600 10.500h8.400" stroke="#222" stroke-width="2"/></svg>
<div class="abs" style="left:1334px;top:43px;width:147px;height:30.500px;background:#eee;border-radius:3px"></div>
<div class="t" style="left:1344px;top:52px;font-size:13.500px;color:#444">Search tools...</div>
<div class="t kbd" style="left:1434.500px;top:50.500px;width:19px">alt</div><div class="t kbd" style="left:1454px;top:50.500px;width:16.500px">C</div>
</div>
<div id="features">
<div class="t" style="left:4.500px;top:8.500px;font-size:13px;font-weight:bold;color:#333">Features (24)</div>
<svg style="left:136px;top:9px" width="19" height="15" viewBox="0 0 19 15" ><path d="M1.500 9.500v-8h5l1.500 1.800h10v10.200h-9" fill="none" stroke="#aaa" stroke-width="1.100"/><path d="M1 11.500v2h2" fill="none" stroke="#aaa" stroke-width="1" stroke-dasharray="1.500 1"/><path d="M6.500 6v6M3.500 9h6" stroke="#3d7fd6" stroke-width="1.400"/></svg>
<svg style="left:166px;top:7px" width="19" height="20" viewBox="0 0 19 20" ><circle cx="9.300" cy="11.500" r="7" fill="none" stroke="#222" stroke-width="1.700"/><path d="M7 1.200h4.600M9.300 1.200v3.300M14.200 4.800l1.800-1.800" stroke="#222" stroke-width="1.700" fill="none"/><path d="M9.300 11.500l3.300 3.300" stroke="#222" stroke-width="1.500"/></svg>
<svg style="left:14px;top:40px" width="17" height="15" viewBox="0 0 17 15" ><path d="M0.800 0.800h15l-5.800 6.800v6.400l-3.400-2.500v-3.900z" fill="none" stroke="#222" stroke-width="1.300" stroke-linejoin="round"/></svg>
<div class="abs" style="left:43.500px;top:32px;width:145px;height:29.500px;border:1px solid #ccc;border-radius:3px;background:#fff;box-shadow:inset 0 1px 1px rgba(0,0,0,.06)"></div>
<div class="t" style="left:49px;top:40.500px;font-size:12.800px;font-style:italic;color:#999">Filter by name or type</div>
<div id="flist">
<div class="row " style="top:-6.2px;color:#999"><svg width="17" height="17" viewBox="0 0 17 17"><path d="M0.500 16h15.500" stroke="#a9c4ea" stroke-width="1.100"/><path d="M2.800 11.800l8.800-9.800c0.500-0.500 1.100-0.500 1.600-0.100l1.300 1.200c0.500 0.400 0.500 1 0.100 1.500l-8.700 9.700-3.700 0.500z" fill="#fff" stroke="#999" stroke-width="1" stroke-linejoin="round"/><path d="M2.900 11.900l3 2.500" stroke="#999" stroke-width="0.800" fill="none"/></svg>Sketch 1</div>
<div class="row " style="top:21.2px;background:#edf2f6;border-bottom:1px solid #7ab6e8;height:23.600px;line-height:23.500px"><svg width="17" height="17" viewBox="0 0 17 17"><path d="M0.600 1.500l2-1h11l2.800 2.500v13h-12.800l-3-2.700z" fill="#fff" stroke="#555" stroke-width="1" stroke-linejoin="round"/><path d="M0.600 1.500l3 2.700v11.800M3.600 4.200h12.800" fill="none" stroke="#555" stroke-width="0.900"/><path d="M6.300 7.500l1.300-1.500h8.700v10h-10z" fill="#8c8c8c" stroke="#555" stroke-width="0.900" stroke-linejoin="round"/></svg>Extrude 1</div>
<div class="row " style="top:45.8px;"><svg width="17" height="17" viewBox="0 0 17 17"><path d="M0.500 16h15.500" stroke="#6a9be0" stroke-width="1.100"/><path d="M2.800 11.800l8.800-9.800c0.500-0.500 1.100-0.500 1.600-0.100l1.300 1.200c0.500 0.400 0.500 1 0.100 1.500l-8.700 9.700-3.700 0.500z" fill="#fff" stroke="#555" stroke-width="1" stroke-linejoin="round"/><path d="M2.900 11.900l3 2.500" stroke="#555" stroke-width="0.800" fill="none"/></svg>Sketch 2</div>
<div class="row " style="top:73.4px;background:#b4dcf4;font-weight:bold;color:#222;height:23.200px;line-height:23.200px"><svg width="17" height="17" viewBox="0 0 17 17"><path d="M0.700 3.500c0-1.300 0.800-2 2-2h10.800l2.800 2.500v11h-12.600l-3-2.500z" fill="#fff" stroke="#555" stroke-width="1.100" stroke-linejoin="round"/><path d="M0.700 3.500l3 2v9.500M3.700 5.500h12.600" fill="none" stroke="#555" stroke-width="0.900"/><path d="M0.700 7.500c1.200 0.400 2 1.500 3 2.800 3-0.400 4.500-2 6.800-2.500 2-0.400 3.800 0 5.800 0.400" fill="none" stroke="#999" stroke-width="1"/></svg>Split 1</div>
<div class="abs" style="left:5px;top:108px;width:174px;height:7px;background:#bdbdbd"></div>
<div class="row dim" style="top:124.8px;"><svg width="17" height="17" viewBox="0 0 17 17"><path d="M0.500 16h15.500" stroke="#b5cdee" stroke-width="1.100"/><path d="M2.800 11.800l8.800-9.800c0.500-0.500 1.100-0.500 1.600-0.100l1.300 1.200c0.500 0.400 0.500 1 0.100 1.500l-8.700 9.700-3.700 0.500z" fill="#fff" stroke="#aaa" stroke-width="1" stroke-linejoin="round"/><path d="M2.900 11.900l3 2.500" stroke="#aaa" stroke-width="0.800" fill="none"/></svg>Sketch 3</div>
<div class="row dim" style="top:150.8px;"><svg width="18" height="18" viewBox="0 0 18 18"><path d="M1.500 16.500c-1.300-4-0.400-7.800 3-9 2.600-0.900 5 0.400 6-1.300 0.400-0.900 0-2.200 0.400-3.500l5.600 0.400c0.400 3 0 6-2.600 7.800-2.600 1.700-5.600 0-6.500 1.700-0.600 1.100-0.300 2.400-0.300 3.900-1.300 0.900-4.300 0.900-5.600 0z" fill="#c6c6c6" stroke="#b0b0b0" stroke-width="1" stroke-linejoin="round"/><ellipse cx="13.700" cy="2.900" rx="2.800" ry="1.700" fill="#fff" stroke="#b0b0b0" stroke-width="0.900"/></svg>Sweep 1</div>
<div class="row dim" style="top:176.8px;"><svg width="17" height="17" viewBox="0 0 17 17"><path d="M0.600 16v-8c0-4.500 2.700-7.500 7.500-7.500h5.500l2.800 2.500v13z" fill="#fff" stroke="#b0b0b0" stroke-width="1" stroke-linejoin="round"/><path d="M0.600 8c0-4.500 2.700-7.500 7.500-7.500l2.700 2.500c-4.500 0-7.300 2.500-7.300 7z" fill="#d0d0d0" stroke="#b0b0b0" stroke-width="0.800"/><path d="M3.500 16v-6M10.800 3h5.600" fill="none" stroke="#b0b0b0" stroke-width="0.900"/></svg>Fillet 1</div>
<div class="row dim" style="top:202.8px;"><svg width="17" height="17" viewBox="0 0 17 17"><path d="M0.600 1.200l2.200-0.600h10.800l2.800 2.500v13h-12.800l-3-2.700z" fill="#fff" stroke="#b0b0b0" stroke-width="1" stroke-linejoin="round"/><path d="M5.500 2h6.500v11h-6.500z" fill="#cfcfcf" stroke="#b0b0b0" stroke-width="0.800"/><path d="M0.600 1.200l3 2.400v12.500M13.500 3.600h2.900M13.200 14v-10.400" fill="none" stroke="#b0b0b0" stroke-width="0.800"/></svg>Shell 1</div>
<div class="row dim" style="top:228.8px;"><svg width="17" height="17" viewBox="0 0 17 17"><path d="M1 0.800l14.500 2.500v12.700l-14.500-2.500z" fill="#e6e6e6" stroke="#b0b0b0" stroke-width="1.100" stroke-linejoin="round"/><path d="M8.300 2.100l7.200 1.200v6.200l-7.200-1z" fill="#fff" stroke="#b0b0b0" stroke-width="0.900"/></svg>Plane 1</div>
<div class="row dim" style="top:254.8px;"><svg width="17" height="17" viewBox="0 0 17 17"><path d="M0.500 16h15.500" stroke="#b5cdee" stroke-width="1.100"/><path d="M2.800 11.800l8.800-9.800c0.500-0.500 1.100-0.500 1.600-0.100l1.300 1.200c0.500 0.400 0.500 1 0.100 1.500l-8.700 9.700-3.700 0.500z" fill="#fff" stroke="#aaa" stroke-width="1" stroke-linejoin="round"/><path d="M2.900 11.900l3 2.500" stroke="#aaa" stroke-width="0.800" fill="none"/></svg>Sketch 4</div>
<div class="row dim" style="top:280.8px;"><svg width="17" height="17" viewBox="0 0 17 17"><path d="M1 0.800l14.500 2.500v12.700l-14.500-2.500z" fill="#e6e6e6" stroke="#b0b0b0" stroke-width="1.100" stroke-linejoin="round"/><path d="M8.300 2.100l7.200 1.200v6.200l-7.200-1z" fill="#fff" stroke="#b0b0b0" stroke-width="0.900"/></svg>Plane 2</div>
<div class="row dim" style="top:306.8px;"><svg width="17" height="17" viewBox="0 0 17 17"><path d="M0.500 16h15.500" stroke="#b5cdee" stroke-width="1.100"/><path d="M2.800 11.800l8.800-9.800c0.500-0.500 1.100-0.500 1.600-0.100l1.300 1.200c0.500 0.400 0.500 1 0.100 1.500l-8.700 9.700-3.700 0.500z" fill="#fff" stroke="#aaa" stroke-width="1" stroke-linejoin="round"/><path d="M2.900 11.900l3 2.500" stroke="#aaa" stroke-width="0.800" fill="none"/></svg>Sketch 5</div>
<div class="row dim" style="top:333.8px;"><svg width="17" height="17" viewBox="0 0 17 17"><path d="M1 0.800l14.500 2.500v12.700l-14.500-2.500z" fill="#e6e6e6" stroke="#b0b0b0" stroke-width="1.100" stroke-linejoin="round"/><path d="M8.300 2.100l7.200 1.200v6.200l-7.200-1z" fill="#fff" stroke="#b0b0b0" stroke-width="0.900"/></svg>Plane 4</div>
</div>
<div class="abs" style="left:184px;top:66px;width:17px;height:355px;background:#f1f1f1"></div>
<div class="abs" style="left:186px;top:148px;width:13px;height:167px;background:#c1c1c1"></div>
<svg style="left:188px;top:73px" width="9" height="6" viewBox="0 0 9 6" ><path d="M0.500 5h8l-4-4.500z" fill="#505050"/></svg>
<svg style="left:188px;top:409px" width="9" height="6" viewBox="0 0 9 6" ><path d="M0.500 0.500h8l-4 4.500z" fill="#505050"/></svg>
<div class="abs" style="left:0;top:421px;width:201px;height:1px;background:#d9d9d9"></div>
<svg style="left:3px;top:430px" width="14" height="9" viewBox="0 0 14 9" ><path d="M1.500 1.500l5.500 5.500 5.500-5.500" fill="none" stroke="#333" stroke-width="2"/></svg>
<div class="t" style="left:23px;top:428px;font-size:13.500px;color:#333">Parts (1)</div>
<div class="abs" style="left:10px;top:449px;width:191px;height:24px;background:#edf2f6;border-bottom:1px solid #a9d3f0;border-left:1px solid #d0d0d0"></div>
<div class="abs" style="left:10px;top:473px;width:1px;height:3px;background:#d0d0d0"></div>
<div class="t" style="left:23px;top:454px;font-size:13.500px;color:#333">Part 1</div>
</div>
<div id="dialog">
<div class="t" style="left:6px;top:9.500px;font-size:12px;font-weight:bold;color:#333">Split 1</div>
<div class="abs" style="left:164px;top:0;width:28.200px;height:28.500px;background:#0c8a12"></div>
<svg style="left:170px;top:7px" width="17" height="14" viewBox="0 0 17 14" ><path d="M1.500 7l5 5 9-10" fill="none" stroke="#fff" stroke-width="2.600"/></svg>
<svg style="left:200px;top:9px" width="13" height="12" viewBox="0 0 13 12" ><path d="M1.200 1l10.500 10M11.700 1l-10.500 10" fill="none" stroke="#d8431c" stroke-width="2.600"/></svg>
<div class="abs" style="left:0;top:28px;width:221px;height:1px;background:#e2e2e2"></div>
<div class="t" style="left:0;top:37.500px;width:108px;text-align:center;font-size:12.500px;color:#444">Part</div>
<div class="t" style="left:108px;top:37.500px;width:113px;text-align:center;font-size:12.500px;font-weight:bold;color:#1b4fb2">Face</div>
<div class="abs" style="left:0;top:54.500px;width:221px;height:1px;background:#d0d0d0"></div>
<div class="abs" style="left:108px;top:53.500px;width:113px;height:2px;background:#1b4fb2"></div>
<div class="abs" style="left:3px;top:61px;width:215px;height:44px;background:#d5ecf8;border:1px solid #2f6fc4;border-radius:2px"></div>
<div class="t" style="left:9px;top:68.200px;font-size:10.400px;color:#666">Faces to split</div>
<div class="t" style="left:10.500px;top:85.800px;font-size:12.800px;color:#333">Face of Extrude 1</div>
<svg style="left:197.5px;top:88px" width="8" height="8" viewBox="0 0 8 8" ><path d="M1 1l6 6M7 1l-6 6" stroke="#aab" stroke-width="1"/></svg>
<div class="abs" style="left:3px;top:110px;width:215px;height:43.500px;background:#fff;border:1px solid #dedede;border-radius:2px"></div>
<div class="t" style="left:9px;top:117.200px;font-size:10.400px;color:#666">Entities to split with</div>
<div class="t" style="left:10.500px;top:134.800px;font-size:12.800px;color:#333">Edges of Sketch 2</div>
<svg style="left:197.5px;top:137px" width="8" height="8" viewBox="0 0 8 8" ><path d="M1 1l6 6M7 1l-6 6" stroke="#bbb" stroke-width="1"/></svg>
<div class="abs" style="left:4px;top:166.500px;width:12px;height:12px;background:#1b4fb2;border-radius:2px"></div>
<svg style="left:6px;top:169px" width="9" height="8" viewBox="0 0 9 8" ><path d="M1 3.800l2.500 2.500 4.300-5" fill="none" stroke="#fff" stroke-width="1.700"/></svg>
<div class="t" style="left:20.500px;top:166px;font-size:13px;color:#555">Keep tool surfaces</div>
<div class="abs" style="left:7px;top:199.600px;width:112px;height:2.400px;background:#555"></div>
<div class="abs" style="left:78.500px;top:195px;width:12px;height:12px;border:1.300px solid #555;border-radius:50%;background:#fff"></div>
<svg style="left:205px;top:196px" width="13" height="13" viewBox="0 0 13 13" ><circle cx="6.500" cy="6.500" r="6" fill="#999"/></svg>
<div class="t" style="left:208px;top:197px;font-size:11px;font-weight:bold;color:#fff">?</div>
</div>
<div class="abs" style="left:206px;top:384px;width:33.500px;height:33.500px;background:#fff;border:1px solid #d4d4d4;border-left:none"></div>
<svg style="left:213px;top:391px" width="20" height="20" viewBox="0 0 20 20" ><path d="M0.500 1l3 4 3-4" fill="none" stroke="#222" stroke-width="1.300"/><path d="M3.500 5v14" stroke="#222" stroke-width="1.300"/><path d="M7.500 3.500h11M6 8.500h12.500M6 13.500h12.500M6 18.500h12.500" stroke="#333" stroke-width="1.200"/></svg>
<div class="abs" style="left:1510px;top:384px;width:34px;height:33.500px;background:#fff;border:1px solid #ccc"></div>
<svg style="left:1516px;top:391px" width="21" height="21" viewBox="0 0 21 21" ><path d="M4.200 8.500l7-4.500 8.300 3.500v9.500l-7.500 3.500-7.800-4.500z" fill="#fff" stroke="#333" stroke-width="1.100" stroke-linejoin="round"/><path d="M4.200 8.500l7.800 3.800 7.500-4.800M12 12.300v8.200" fill="none" stroke="#333" stroke-width="1.100"/><rect x="0" y="0.500" width="10.500" height="8.500" rx="0.800" fill="#2563c4"/><path d="M1.300 1.600h2.200v1.600h-2.200zM4.200 1.600h2.200v1.600h-2.200zM7.100 1.600h2.200v1.600h-2.200zM1.300 4h2.200v1.600h-2.200zM4.200 4h2.200v1.600h-2.200zM7.100 4h2.200v1.600h-2.200zM1.300 6.400h2.200v1.600h-2.200zM4.200 6.400h2.200v1.600h-2.200zM7.100 6.400h2.200v1.600h-2.200z" fill="#6aa8ec"/></svg>
<svg style="left:0;top:0" width="1542" height="752" viewBox="0 0 1542 752"><path d="M1444 100.500l8-9 8 9z" fill="#dfe6ee"/><path d="M1444.500 232l7.500 9 7.500-9z" fill="#dfe6ee"/><path d="M1386 159v15l-9.500-7.500z" fill="#dfe6ee"/><path d="M1517.500 159v15l9.500-7.500z" fill="#dfe6ee"/><path d="M1431.500 103A75 75 0 0 0 1405 116.500" fill="none" stroke="#dfe6ee" stroke-width="5.200"/><path d="M1398.300 124.300l0.700-12.800 10.300 10.800z" fill="#dfe6ee"/><path d="M1472.500 103A75 75 0 0 1 1499 116.500" fill="none" stroke="#dfe6ee" stroke-width="5.200"/><path d="M1505.700 124.300l-0.700-12.800-10.300 10.800z" fill="#dfe6ee"/><path d="M1423 138.500h57.500v57.500h-57.500z" fill="#dfe6ee"/><circle cx="1423" cy="138.500" r="9" fill="#fff"/><circle cx="1480.500" cy="138.500" r="9" fill="#fff"/><circle cx="1423" cy="196" r="9" fill="#fff"/><circle cx="1480.500" cy="196" r="9" fill="#fff"/><rect x="1429" y="144" width="45" height="45" rx="10" fill="#fff"/><path d="M1421 138.500v58.300" stroke="#3a3ae0" stroke-width="1.600"/><path d="M1420.200 196.600h60" stroke="#e25252" stroke-width="1.600"/><text x="1451.800" y="171.300" text-anchor="middle" font-family="Liberation Sans, sans-serif" font-size="12" fill="#444" textLength="28.500" lengthAdjust="spacingAndGlyphs">Front</text><text x="1421.300" y="133.300" text-anchor="middle" font-family="Liberation Sans, sans-serif" font-size="11.500" font-weight="bold" fill="#3a3ae0" textLength="6.500" lengthAdjust="spacingAndGlyphs">Z</text><text x="1490.300" y="201.800" text-anchor="middle" font-family="Liberation Sans, sans-serif" font-size="12" font-weight="bold" fill="#e23c3c" textLength="7.200" lengthAdjust="spacingAndGlyphs">X</text><path d="M1488 227l9.500-3.300 8.500 3.500v10.500l-8.500 4.500-9.500-4.500z" fill="#fff" stroke="#333" stroke-width="1.100" stroke-linejoin="round"/><path d="M1488 227l9.500 4 0 11-9.500-4.500z" fill="#9a9a9a" stroke="#333" stroke-width="0.900" stroke-linejoin="round"/><path d="M1497.500 231l8.500-3.800v10.500l-8.500 4.500z" fill="#ddd" stroke="#333" stroke-width="0.900" stroke-linejoin="round"/><path d="M1514 230.500h8l-4 4.500z" fill="#222"/></svg>
<div id="bottombar">
<svg style="left:8px;top:6px" width="18" height="17" viewBox="0 0 18 17" ><path d="M0 1h17.500" stroke="#444" stroke-width="1.600"/><circle cx="6.500" cy="9.500" r="4.500" fill="none" stroke="#444" stroke-width="1.600"/><path d="M9.800 12.800l3.700 3.700" stroke="#444" stroke-width="1.800"/><path d="M13 6.500h4.500M14 10.500h3.500" stroke="#444" stroke-width="1.500"/></svg>
<svg style="left:46px;top:8px" width="17" height="15" viewBox="0 0 17 15" ><path d="M8.300 0v14.500M0.300 7.200h16" stroke="#333" stroke-width="2.300"/></svg>
<div class="abs" style="left:76.500px;top:0;width:200px;height:26px;background:#fff;border-radius:0 0 4px 4px"></div>
<svg style="left:88px;top:4px" width="18" height="19" viewBox="0 0 18 19" ><path d="M0.700 5.500l2-2h4.500v13l-2 2h-4.500z" fill="#fff" stroke="#444" stroke-width="1.100" stroke-linejoin="round"/><path d="M0.700 5.500h4.500v13M5.200 5.500l2-2" fill="none" stroke="#444" stroke-width="0.900"/><path d="M8.500 3c0-1.500 1.500-2.500 4-2.500s4.500 1 4.500 2.500v13.500c0 1-2 2-4.500 2s-4-1-4-2z" fill="#fff" stroke="#444" stroke-width="1.100"/><path d="M10.500 1v17" stroke="#444" stroke-width="0.800"/></svg>
<div class="t" style="left:110px;top:6.500px;font-size:13.500px;color:#333">Part Studio 1</div>
<div class="abs" style="left:277px;top:0;width:203px;height:26px;background:#e8e8e8;border-radius:0 0 4px 4px"></div>
<svg style="left:290px;top:4px" width="19" height="19" viewBox="0 0 19 19" ><path d="M0.700 2.500l2-2h12l3.500 3.500v12.500l-2 2h-12.500l-3-3z" fill="#fff" stroke="#444" stroke-width="1.100" stroke-linejoin="round"/><path d="M3.500 3h9.500v9h-9.500z" fill="#888" stroke="#444" stroke-width="0.900"/><path d="M3.500 3l2.500 2.500h9.500v9l-2.500-2.500M6 5.500v9h9.500M3.500 12l2.500 2.500" fill="none" stroke="#444" stroke-width="0.900"/><path d="M6 5.500h9.500v9h-9.500z" fill="#ccc" fill-opacity="0.500"/></svg>
<div class="t" style="left:312.500px;top:6.500px;font-size:13.700px;color:#444">Assembly 1</div>
</div>
</body>
</html>
